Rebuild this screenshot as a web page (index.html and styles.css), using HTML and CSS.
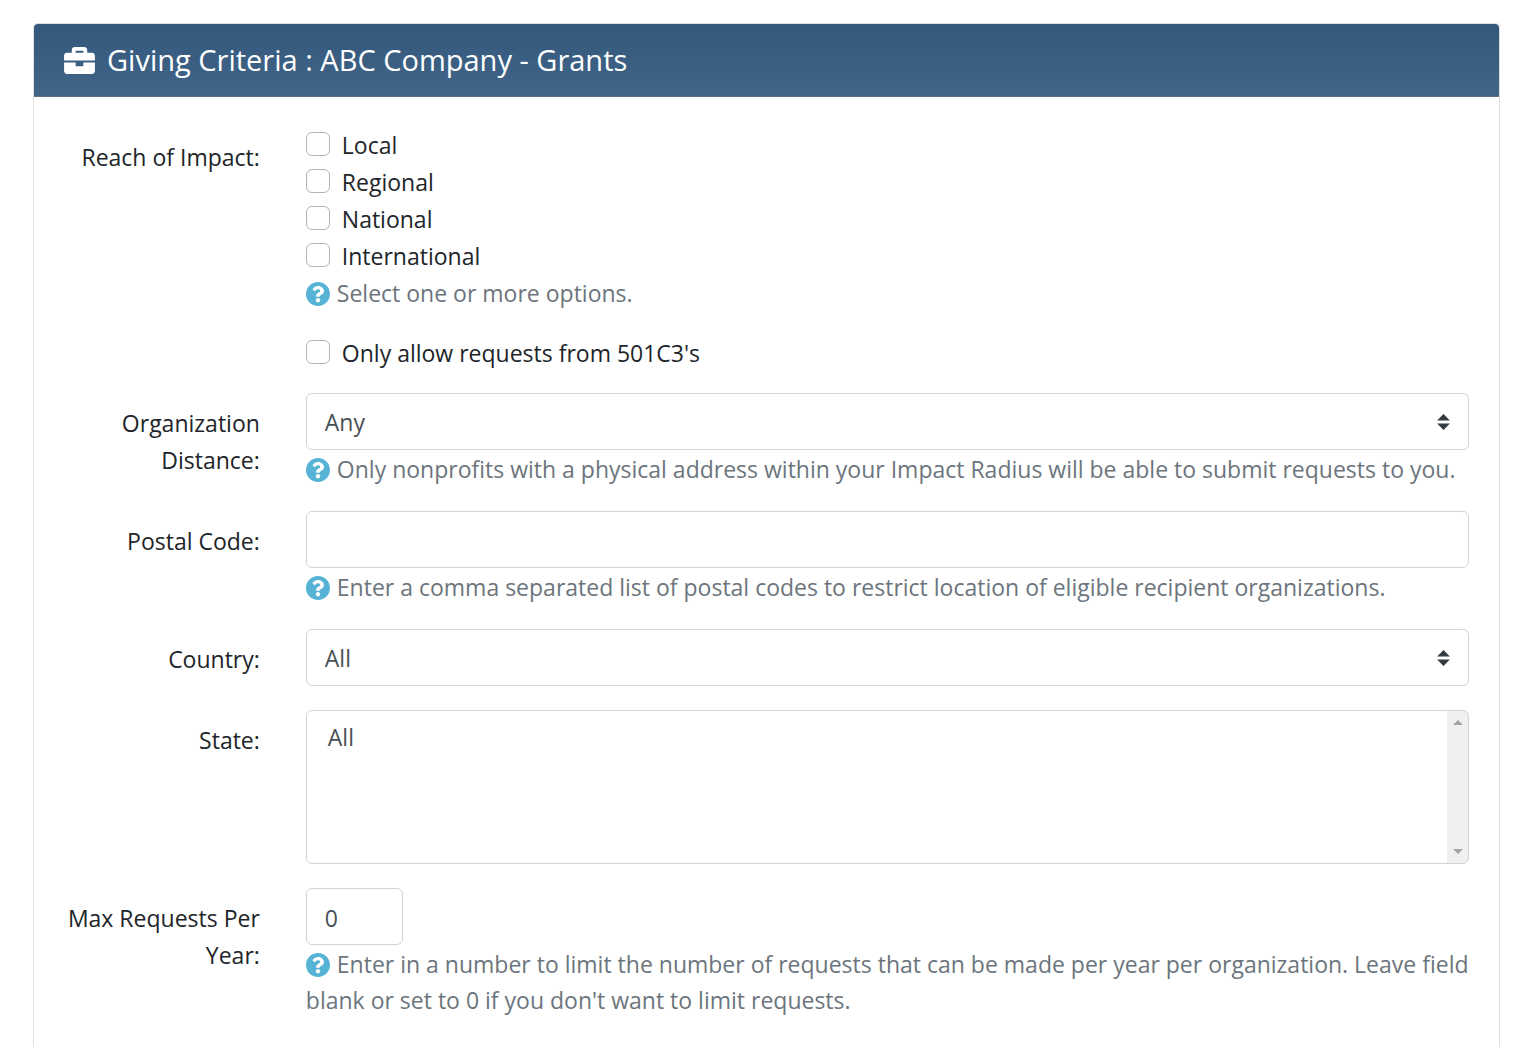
FILE: index.html
```html
<!DOCTYPE html>
<html lang="en">
<head>
    <meta charset="utf-8">
    <meta name="viewport" content="width=device-width, initial-scale=1">
    <title>Giving Criteria</title>
    <link rel="stylesheet" href="styles.css">
</head>
<body>
    <!-- shared icons -->
    <svg class="sprite" aria-hidden="true">
        <symbol id="question" viewBox="8 8 496 496">
            <path d="M504 256c0 136.997-111.043 248-248 248S8 392.997 8 256C8 119.083 119.043 8 256 8s248 111.083 248 248zM262.655 90c-54.497 0-89.255 22.957-116.549 63.758-3.536 5.286-2.353 12.415 2.715 16.258l34.699 26.31c5.205 3.947 12.621 3.008 16.665-2.122 17.864-22.658 30.113-35.797 57.303-35.797 20.429 0 45.698 13.148 45.698 32.958 0 14.976-12.363 22.667-32.534 33.976C247.128 238.528 216 254.941 216 296v4c0 6.627 5.373 12 12 12h56c6.627 0 12-5.373 12-12v-1.333c0-28.462 83.186-29.647 83.186-106.667 0-58.002-60.165-102-116.531-102zM256 338c-25.365 0-46 20.635-46 46 0 25.364 20.635 46 46 46s46-20.636 46-46c0-25.365-20.635-46-46-46z"/>
        </symbol>
    </svg>

    <main class="card">
        <header class="card-header">
            <svg class="icon-briefcase" viewBox="0 0 512 448" aria-hidden="true">
                <path d="M320 304c0 9-7 16-16 16h-96c-9 0-16-7-16-16v-48H0v144c0 26 22 48 48 48h416c26 0 48-22 48-48V256H320v48zm144-208h-80V48c0-26-22-48-48-48H176c-26 0-48 22-48 48v48H48c-26 0-48 22-48 48v80h512v-80c0-26-22-48-48-48zm-144 0H192V64h128v32z"/>
            </svg>
            <h1 class="card-title">Giving Criteria : ABC Company - Grants</h1>
        </header>

        <form class="card-body">
            <div class="form-row" role="group" aria-labelledby="reach-label">
                <div class="label" id="reach-label">Reach of Impact:</div>
                <div class="field">
                    <label class="check"><input type="checkbox" name="reach" value="local">Local</label>
                    <label class="check"><input type="checkbox" name="reach" value="regional">Regional</label>
                    <label class="check"><input type="checkbox" name="reach" value="national">National</label>
                    <label class="check"><input type="checkbox" name="reach" value="international">International</label>
                    <div class="help"><svg class="icon-help" aria-hidden="true"><use href="#question"/></svg>Select one or more options.</div>
                </div>
            </div>

            <div class="form-row form-row-check">
                <div class="label"></div>
                <div class="field">
                    <label class="check"><input type="checkbox" name="only501c3">Only allow requests from 501C3's</label>
                </div>
            </div>

            <div class="form-row">
                <label class="label" for="distance">Organization Distance:</label>
                <div class="field">
                    <select class="control select" id="distance">
                        <option>Any</option>
                    </select>
                    <div class="help help-below"><svg class="icon-help" aria-hidden="true"><use href="#question"/></svg>Only nonprofits with a physical address within your Impact Radius will be able to submit requests to you.</div>
                </div>
            </div>

            <div class="form-row">
                <label class="label" for="postal">Postal Code:</label>
                <div class="field">
                    <input class="control" type="text" id="postal">
                    <div class="help help-below"><svg class="icon-help" aria-hidden="true"><use href="#question"/></svg>Enter a comma separated list of postal codes to restrict location of eligible recipient organizations.</div>
                </div>
            </div>

            <div class="form-row">
                <label class="label" for="country">Country:</label>
                <div class="field">
                    <select class="control select" id="country">
                        <option>All</option>
                    </select>
                </div>
            </div>

            <div class="form-row">
                <label class="label" for="state">State:</label>
                <div class="field">
                    <select class="control listbox" id="state" multiple size="4">
                        <option>All</option>
                    </select>
                </div>
            </div>

            <div class="form-row">
                <label class="label" for="max-requests">Max Requests Per Year:</label>
                <div class="field">
                    <input class="control control-small" type="text" inputmode="numeric" id="max-requests" value="0">
                    <div class="help help-below"><svg class="icon-help" aria-hidden="true"><use href="#question"/></svg>Enter in a number to limit the number of requests that can be made per year per organization. Leave field blank or set to 0 if you don't want to limit requests.</div>
                </div>
            </div>
        </form>
    </main>
</body>
</html>
```
FILE: styles.css
```css
:root {
    --text: #212529;
    --input-text: #495057;
    --muted: #6c757d;
    --border: #ced4da;
    --info: #56b3d5;
}

* {
    box-sizing: border-box;
}

body {
    margin: 0;
    min-height: 100vh;
    padding: 23px 36px 0 33px;
    display: flex;
    flex-direction: column;
    font-family: "Segoe UI", "Open Sans", "Noto Sans", sans-serif;
    font-size: 23px;
    line-height: 37px;
    color: var(--text);
    background: white;
}

.sprite {
    display: none;
}

.card {
    flex: 1;
    border: 1px solid #dfdfdf;
    border-bottom: 0;
    border-radius: 5px 5px 0 0;
}

.card-header {
    display: flex;
    align-items: center;
    gap: 12px;
    padding: 18px 30px;
    color: white;
    background: linear-gradient(#34587c, #406589);
    border-bottom: 1px solid #61707f;
    border-radius: 4px 4px 0 0;
}

.card-title {
    margin: 0;
    font-size: 29px;
    font-weight: 400;
    line-height: 36px;
}

.icon-briefcase {
    width: 31px;
    height: 27px;
    fill: white;
}

.card-body {
    padding: 30px;
}

/* Label takes 2 of 12 columns, field the other 10 */
.form-row {
    display: grid;
    grid-template-columns: 1fr 5fr;
    margin: 0 -23px 24px;
}

.form-row-check {
    margin-bottom: 21px;
}

.label {
    padding: 12px 23px 0;
    text-align: right;
}

.form-row-check .label {
    padding-top: 0;
}

.field {
    padding: 0 23px;
    min-width: 0;
}

.check {
    display: flex;
    align-items: center;
    gap: 12px;
}

.check input {
    appearance: none;
    width: 24px;
    height: 24px;
    margin: 0 0 3px;
    border: 1px solid #adb5bd;
    border-radius: 6px;
    background: white;
}

.check input:checked {
    background: var(--info);
}

.help {
    line-height: 36px;
    color: var(--muted);
}

.help-below {
    margin-top: 1px;
}

.icon-help {
    width: 24px;
    height: 24px;
    margin-right: 7px;
    vertical-align: -4px;
    fill: var(--info);
}

.control {
    display: block;
    width: 100%;
    height: 57px;
    padding: 10px 18px 8px;
    border: 1px solid var(--border);
    border-radius: 6px;
    font: inherit;
    color: var(--input-text);
    background: white;
}

.control-small {
    width: 97px;
}

.select {
    appearance: none;
    background: white url("data:image/svg+xml,%3csvg xmlns='http://www.w3.org/2000/svg' viewBox='0 0 4 5'%3e%3cpath fill='%23343a40' d='M2 0L0 2h4zm0 5L0 3h4z'/%3e%3c/svg%3e") no-repeat right 18px center / 13px 16px;
}

/* Always shows a scroll track on the right, whatever the platform draws */
.listbox {
    height: 154px;
    padding: 10px 21px 8px 18px;
    scrollbar-width: none;
    background:
        url("data:image/svg+xml,%3csvg xmlns='http://www.w3.org/2000/svg' viewBox='0 0 10 5'%3e%3cpath fill='%23a3a3a3' d='M0 5L5 0l5 5z'/%3e%3c/svg%3e") no-repeat right 5px top 9px / 10px 5px,
        url("data:image/svg+xml,%3csvg xmlns='http://www.w3.org/2000/svg' viewBox='0 0 10 5'%3e%3cpath fill='%23a3a3a3' d='M0 0l5 5 5-5z'/%3e%3c/svg%3e") no-repeat right 5px bottom 9px / 10px 5px,
        linear-gradient(#f0f0f0, #f0f0f0) no-repeat right / 21px 100%,
        white;
}

.listbox option {
    padding: 0 3px;
    min-height: 37px;
    line-height: 37px;
}
```
